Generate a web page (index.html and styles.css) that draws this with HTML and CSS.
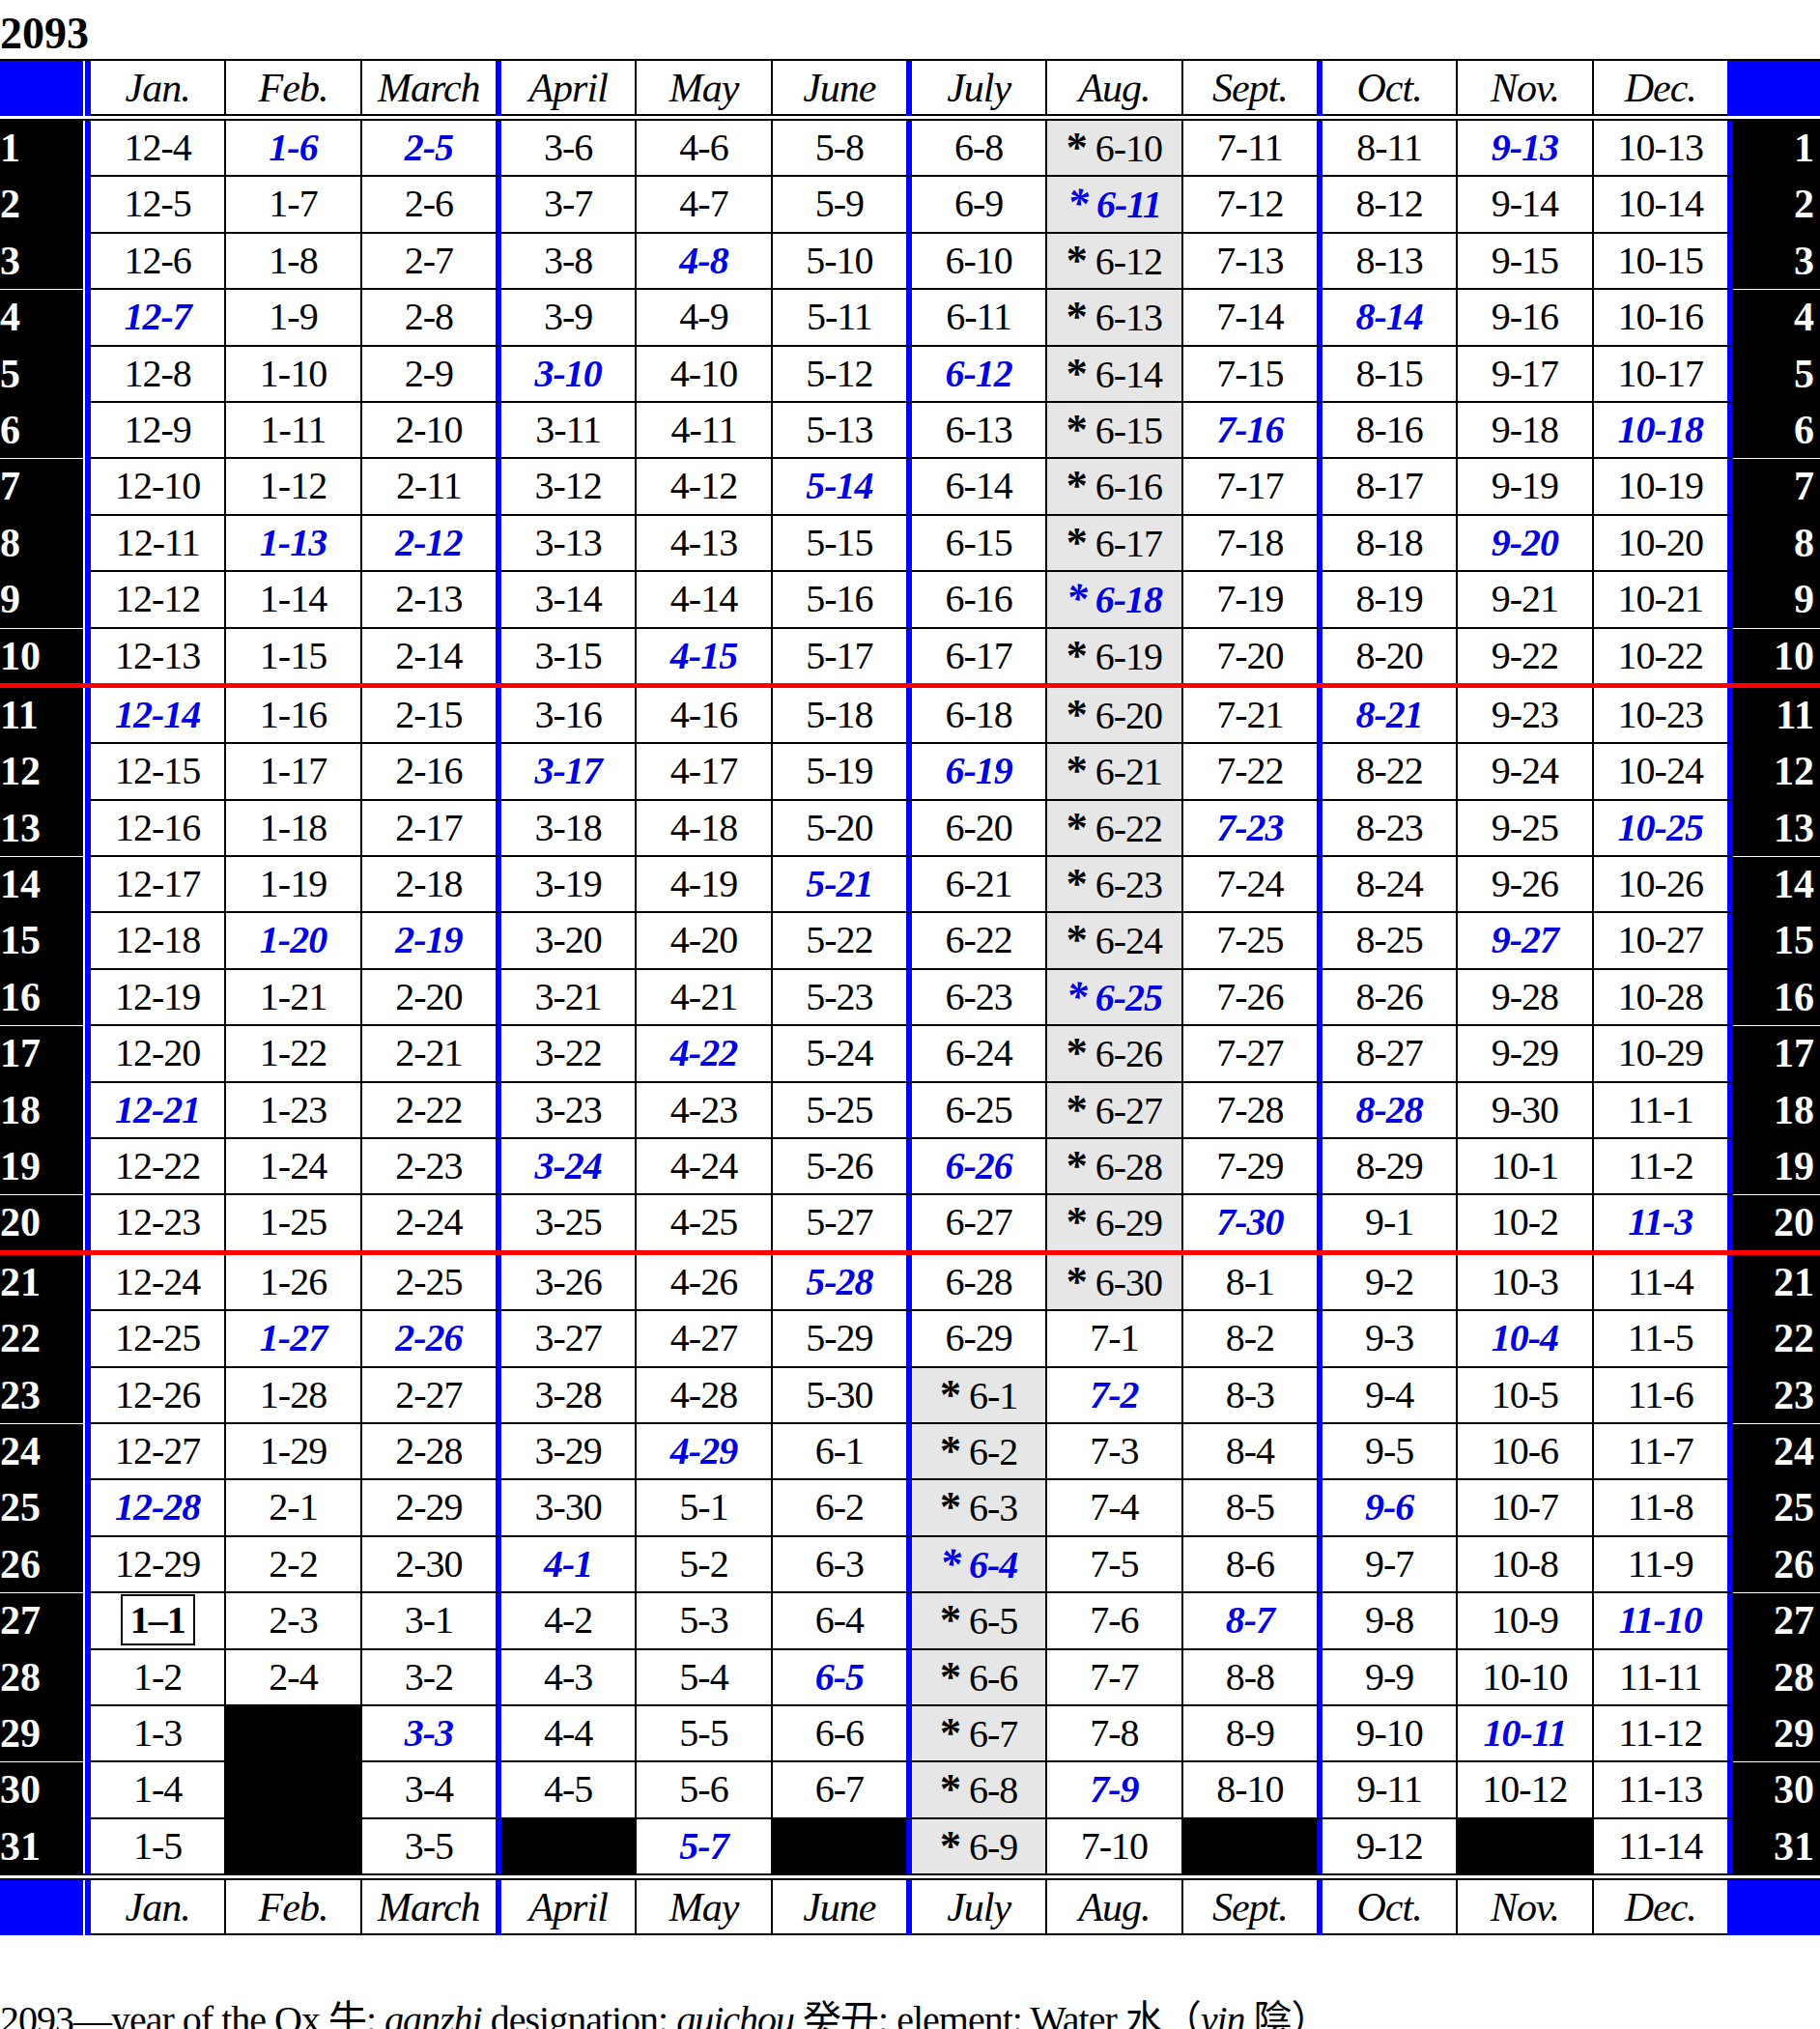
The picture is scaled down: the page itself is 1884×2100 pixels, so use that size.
FILE: index.html
```html
<!DOCTYPE html>
<html lang="en">
<head>
<meta charset="utf-8">
<title>2093</title>
<link rel="stylesheet" href="styles.css">
</head>
<body>
<div class="title">2093</div>
<div class="cal">
  <div class="hdr"><span class="c0"></span><span>Jan.</span><span>Feb.</span><span>March</span><span>April</span><span>May</span><span>June</span><span>July</span><span>Aug.</span><span>Sept.</span><span>Oct.</span><span>Nov.</span><span>Dec.</span><span class="c14"></span></div>
  <div class="dbl"></div>

  <div class="row"><span class="n">1</span><span>12-4</span><span class="h">1-6</span><span class="h">2-5</span><span>3-6</span><span>4-6</span><span>5-8</span><span>6-8</span><span class="g"><b class="s">*</b> 6-10</span><span>7-11</span><span>8-11</span><span class="h">9-13</span><span>10-13</span><span class="n rt">1</span></div>
  <div class="row"><span class="n">2</span><span>12-5</span><span>1-7</span><span>2-6</span><span>3-7</span><span>4-7</span><span>5-9</span><span>6-9</span><span class="g h"><b class="s">*</b> 6-11</span><span>7-12</span><span>8-12</span><span>9-14</span><span>10-14</span><span class="n rt">2</span></div>
  <div class="row gb"><span class="n">3</span><span>12-6</span><span>1-8</span><span>2-7</span><span>3-8</span><span class="h">4-8</span><span>5-10</span><span>6-10</span><span class="g"><b class="s">*</b> 6-12</span><span>7-13</span><span>8-13</span><span>9-15</span><span>10-15</span><span class="n rt">3</span></div>
  <div class="row"><span class="n">4</span><span class="h">12-7</span><span>1-9</span><span>2-8</span><span>3-9</span><span>4-9</span><span>5-11</span><span>6-11</span><span class="g"><b class="s">*</b> 6-13</span><span>7-14</span><span class="h">8-14</span><span>9-16</span><span>10-16</span><span class="n rt">4</span></div>
  <div class="row"><span class="n">5</span><span>12-8</span><span>1-10</span><span>2-9</span><span class="h">3-10</span><span>4-10</span><span>5-12</span><span class="h">6-12</span><span class="g"><b class="s">*</b> 6-14</span><span>7-15</span><span>8-15</span><span>9-17</span><span>10-17</span><span class="n rt">5</span></div>
  <div class="row gb"><span class="n">6</span><span>12-9</span><span>1-11</span><span>2-10</span><span>3-11</span><span>4-11</span><span>5-13</span><span>6-13</span><span class="g"><b class="s">*</b> 6-15</span><span class="h">7-16</span><span>8-16</span><span>9-18</span><span class="h">10-18</span><span class="n rt">6</span></div>
  <div class="row"><span class="n">7</span><span>12-10</span><span>1-12</span><span>2-11</span><span>3-12</span><span>4-12</span><span class="h">5-14</span><span>6-14</span><span class="g"><b class="s">*</b> 6-16</span><span>7-17</span><span>8-17</span><span>9-19</span><span>10-19</span><span class="n rt">7</span></div>
  <div class="row"><span class="n">8</span><span>12-11</span><span class="h">1-13</span><span class="h">2-12</span><span>3-13</span><span>4-13</span><span>5-15</span><span>6-15</span><span class="g"><b class="s">*</b> 6-17</span><span>7-18</span><span>8-18</span><span class="h">9-20</span><span>10-20</span><span class="n rt">8</span></div>
  <div class="row gb"><span class="n">9</span><span>12-12</span><span>1-14</span><span>2-13</span><span>3-14</span><span>4-14</span><span>5-16</span><span>6-16</span><span class="g h"><b class="s">*</b> 6-18</span><span>7-19</span><span>8-19</span><span>9-21</span><span>10-21</span><span class="n rt">9</span></div>
  <div class="row end"><span class="n">10</span><span>12-13</span><span>1-15</span><span>2-14</span><span>3-15</span><span class="h">4-15</span><span>5-17</span><span>6-17</span><span class="g"><b class="s">*</b> 6-19</span><span>7-20</span><span>8-20</span><span>9-22</span><span>10-22</span><span class="n rt">10</span></div>
  <div class="red"></div>

  <div class="row"><span class="n">11</span><span class="h">12-14</span><span>1-16</span><span>2-15</span><span>3-16</span><span>4-16</span><span>5-18</span><span>6-18</span><span class="g"><b class="s">*</b> 6-20</span><span>7-21</span><span class="h">8-21</span><span>9-23</span><span>10-23</span><span class="n rt">11</span></div>
  <div class="row"><span class="n">12</span><span>12-15</span><span>1-17</span><span>2-16</span><span class="h">3-17</span><span>4-17</span><span>5-19</span><span class="h">6-19</span><span class="g"><b class="s">*</b> 6-21</span><span>7-22</span><span>8-22</span><span>9-24</span><span>10-24</span><span class="n rt">12</span></div>
  <div class="row gb"><span class="n">13</span><span>12-16</span><span>1-18</span><span>2-17</span><span>3-18</span><span>4-18</span><span>5-20</span><span>6-20</span><span class="g"><b class="s">*</b> 6-22</span><span class="h">7-23</span><span>8-23</span><span>9-25</span><span class="h">10-25</span><span class="n rt">13</span></div>
  <div class="row"><span class="n">14</span><span>12-17</span><span>1-19</span><span>2-18</span><span>3-19</span><span>4-19</span><span class="h">5-21</span><span>6-21</span><span class="g"><b class="s">*</b> 6-23</span><span>7-24</span><span>8-24</span><span>9-26</span><span>10-26</span><span class="n rt">14</span></div>
  <div class="row"><span class="n">15</span><span>12-18</span><span class="h">1-20</span><span class="h">2-19</span><span>3-20</span><span>4-20</span><span>5-22</span><span>6-22</span><span class="g"><b class="s">*</b> 6-24</span><span>7-25</span><span>8-25</span><span class="h">9-27</span><span>10-27</span><span class="n rt">15</span></div>
  <div class="row gb"><span class="n">16</span><span>12-19</span><span>1-21</span><span>2-20</span><span>3-21</span><span>4-21</span><span>5-23</span><span>6-23</span><span class="g h"><b class="s">*</b> 6-25</span><span>7-26</span><span>8-26</span><span>9-28</span><span>10-28</span><span class="n rt">16</span></div>
  <div class="row"><span class="n">17</span><span>12-20</span><span>1-22</span><span>2-21</span><span>3-22</span><span class="h">4-22</span><span>5-24</span><span>6-24</span><span class="g"><b class="s">*</b> 6-26</span><span>7-27</span><span>8-27</span><span>9-29</span><span>10-29</span><span class="n rt">17</span></div>
  <div class="row"><span class="n">18</span><span class="h">12-21</span><span>1-23</span><span>2-22</span><span>3-23</span><span>4-23</span><span>5-25</span><span>6-25</span><span class="g"><b class="s">*</b> 6-27</span><span>7-28</span><span class="h">8-28</span><span>9-30</span><span>11-1</span><span class="n rt">18</span></div>
  <div class="row gb"><span class="n">19</span><span>12-22</span><span>1-24</span><span>2-23</span><span class="h">3-24</span><span>4-24</span><span>5-26</span><span class="h">6-26</span><span class="g"><b class="s">*</b> 6-28</span><span>7-29</span><span>8-29</span><span>10-1</span><span>11-2</span><span class="n rt">19</span></div>
  <div class="row end"><span class="n">20</span><span>12-23</span><span>1-25</span><span>2-24</span><span>3-25</span><span>4-25</span><span>5-27</span><span>6-27</span><span class="g"><b class="s">*</b> 6-29</span><span class="h">7-30</span><span>9-1</span><span>10-2</span><span class="h">11-3</span><span class="n rt">20</span></div>
  <div class="red"></div>

  <div class="row"><span class="n">21</span><span>12-24</span><span>1-26</span><span>2-25</span><span>3-26</span><span>4-26</span><span class="h">5-28</span><span>6-28</span><span class="g"><b class="s">*</b> 6-30</span><span>8-1</span><span>9-2</span><span>10-3</span><span>11-4</span><span class="n rt">21</span></div>
  <div class="row"><span class="n">22</span><span>12-25</span><span class="h">1-27</span><span class="h">2-26</span><span>3-27</span><span>4-27</span><span>5-29</span><span>6-29</span><span>7-1</span><span>8-2</span><span>9-3</span><span class="h">10-4</span><span>11-5</span><span class="n rt">22</span></div>
  <div class="row gb"><span class="n">23</span><span>12-26</span><span>1-28</span><span>2-27</span><span>3-28</span><span>4-28</span><span>5-30</span><span class="g"><b class="s">*</b> 6-1</span><span class="h">7-2</span><span>8-3</span><span>9-4</span><span>10-5</span><span>11-6</span><span class="n rt">23</span></div>
  <div class="row"><span class="n">24</span><span>12-27</span><span>1-29</span><span>2-28</span><span>3-29</span><span class="h">4-29</span><span>6-1</span><span class="g"><b class="s">*</b> 6-2</span><span>7-3</span><span>8-4</span><span>9-5</span><span>10-6</span><span>11-7</span><span class="n rt">24</span></div>
  <div class="row"><span class="n">25</span><span class="h">12-28</span><span>2-1</span><span>2-29</span><span>3-30</span><span>5-1</span><span>6-2</span><span class="g"><b class="s">*</b> 6-3</span><span>7-4</span><span>8-5</span><span class="h">9-6</span><span>10-7</span><span>11-8</span><span class="n rt">25</span></div>
  <div class="row gb"><span class="n">26</span><span>12-29</span><span>2-2</span><span>2-30</span><span class="h">4-1</span><span>5-2</span><span>6-3</span><span class="g h"><b class="s">*</b> 6-4</span><span>7-5</span><span>8-6</span><span>9-7</span><span>10-8</span><span>11-9</span><span class="n rt">26</span></div>
  <div class="row"><span class="n">27</span><span><em class="bx">1–1</em></span><span>2-3</span><span>3-1</span><span>4-2</span><span>5-3</span><span>6-4</span><span class="g"><b class="s">*</b> 6-5</span><span>7-6</span><span class="h">8-7</span><span>9-8</span><span>10-9</span><span class="h">11-10</span><span class="n rt">27</span></div>
  <div class="row"><span class="n">28</span><span>1-2</span><span>2-4</span><span>3-2</span><span>4-3</span><span>5-4</span><span class="h">6-5</span><span class="g"><b class="s">*</b> 6-6</span><span>7-7</span><span>8-8</span><span>9-9</span><span>10-10</span><span>11-11</span><span class="n rt">28</span></div>
  <div class="row gb"><span class="n">29</span><span>1-3</span><span class="x"></span><span class="h">3-3</span><span>4-4</span><span>5-5</span><span>6-6</span><span class="g"><b class="s">*</b> 6-7</span><span>7-8</span><span>8-9</span><span>9-10</span><span class="h">10-11</span><span>11-12</span><span class="n rt">29</span></div>
  <div class="row"><span class="n">30</span><span>1-4</span><span class="x"></span><span>3-4</span><span>4-5</span><span>5-6</span><span>6-7</span><span class="g"><b class="s">*</b> 6-8</span><span class="h">7-9</span><span>8-10</span><span>9-11</span><span>10-12</span><span>11-13</span><span class="n rt">30</span></div>
  <div class="row end"><span class="n">31</span><span>1-5</span><span class="x"></span><span>3-5</span><span class="x"></span><span class="h">5-7</span><span class="x"></span><span class="g"><b class="s">*</b> 6-9</span><span>7-10</span><span class="x"></span><span>9-12</span><span class="x"></span><span>11-14</span><span class="n rt">31</span></div>
  <div class="dbl"></div>

  <div class="hdr ftr"><span class="c0"></span><span>Jan.</span><span>Feb.</span><span>March</span><span>April</span><span>May</span><span>June</span><span>July</span><span>Aug.</span><span>Sept.</span><span>Oct.</span><span>Nov.</span><span>Dec.</span><span class="c14"></span></div>
</div>
<p class="note">2093—year of the Ox 牛; <i>ganzhi</i> designation: <i>guichou</i> 癸丑; element: Water 水（<i>yin</i> 陰）</p>
</body>
</html>
```
FILE: styles.css
```css
html, body {
  margin: 0;
  padding: 0;
  background: #fff;
}
body {
  height: 2100px;
  overflow: hidden;
  font-family: "Liberation Serif", "Noto Sans CJK TC", serif;
  color: #000;
}
.title {
  font-weight: bold;
  font-size: 46px;
  line-height: 52px;
  height: 52px;
  padding-top: 9px;
}
.cal {
  --cols: 94px 140.33px 140.33px 144.33px 140.33px 140.33px 144.33px 140.33px 140.33px 144.33px 140.33px 140.33px 144.33px 1fr;
  width: 100%;
}
.hdr, .row {
  display: grid;
  grid-template-columns: var(--cols);
}
.hdr {
  box-sizing: border-box;
  height: 57px;
  border-top: 2px solid #000;
}
.hdr.ftr {
  border-top: 0;
  border-bottom: 2px solid #000;
}
.hdr > span {
  box-sizing: border-box;
  border-right: 2px solid #000;
  text-align: center;
  font-style: italic;
  font-size: 42px;
  line-height: 57px;
  letter-spacing: -1px;
  white-space: nowrap;
}
.hdr > span:nth-child(4),
.hdr > span:nth-child(7),
.hdr > span:nth-child(10),
.hdr > span:nth-child(13),
.row > span:nth-child(4),
.row > span:nth-child(7),
.row > span:nth-child(10),
.row > span:nth-child(13) {
  border-right: 6px solid #0000ff;
}
.hdr > .c0 {
  border: 0;
  background: linear-gradient(90deg, #0000ff 0 86px, #fff 86px 88px, #0000ff 88px);
}
.hdr > .c14 {
  border: 0;
  background: #0000ff;
}
.dbl {
  height: 7px;
  background: linear-gradient(#000 0 2px, #fff 2px 5px, #000 5px 7px);
}
.red {
  height: 5px;
  background: #ff0000;
}
.row {
  height: 58.4px;
}
.row > span {
  box-sizing: border-box;
  border-right: 2px solid #000;
  border-bottom: 2px solid #000;
  text-align: center;
  font-size: 40px;
  line-height: 56.4px;
  letter-spacing: -1px;
  white-space: nowrap;
  overflow: hidden;
}
.row.end {
  height: 56.4px;
}
.row.end > span {
  border-bottom: 0;
}
.row > .n {
  border: 0;
  color: #fff;
  font-weight: bold;
  font-size: 42px;
  text-align: left;
  letter-spacing: 0;
  background: linear-gradient(90deg, #000 0 86px, #fff 86px 88px, #0000ff 88px);
}
.row > .n.rt {
  text-align: right;
  padding-right: 6px;
  background: #000;
}
.row.gb > .n {
  background:
    linear-gradient(#fff, #fff) left bottom / 86px 1px no-repeat,
    linear-gradient(90deg, #000 0 86px, #fff 86px 88px, #0000ff 88px);
}
.row.gb > .n.rt {
  background:
    linear-gradient(#fff, #fff) left bottom / 100% 1px no-repeat,
    #000;
}
.row > .g {
  background: #e6e6e6;
}
.row > .h {
  color: #0000e0;
  font-weight: bold;
  font-style: italic;
}
.row > .x {
  background: #000;
}
.s {
  font-weight: bold;
  font-size: 44px;
}
.bx {
  display: inline-block;
  vertical-align: top;
  margin-top: 1px;
  height: 49px;
  line-height: 49px;
  padding: 0 8px;
  border: 2px solid #000;
  font-style: normal;
  font-weight: bold;
}
.note {
  margin: 66px 0 0;
  font-size: 40px;
  line-height: 44px;
  letter-spacing: -1px;
  white-space: nowrap;
}
```
